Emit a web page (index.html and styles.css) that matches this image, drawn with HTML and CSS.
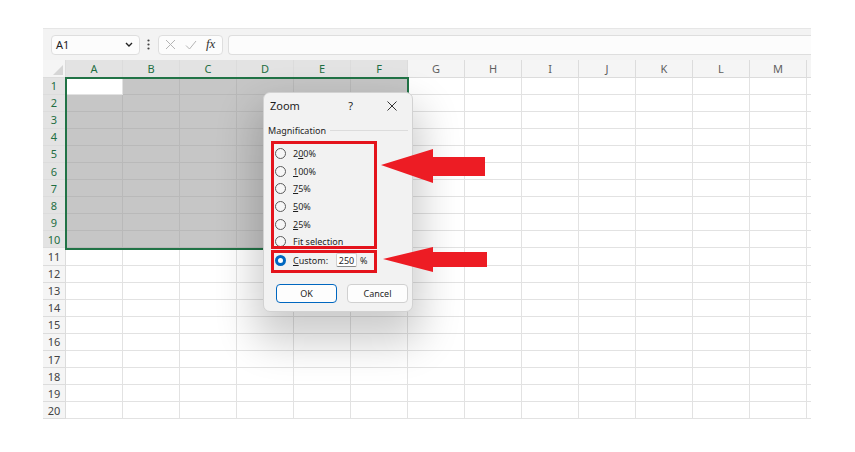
FILE: index.html
```html
<!DOCTYPE html>
<html lang="en">
<head>
  <meta charset="UTF-8">
  <meta name="viewport" content="width=device-width, initial-scale=1.0">
  <link rel="stylesheet" href="styles.css">
  <title>Zoom dialog</title>
</head>
<body>
  <div class="excel">
    <div class="toolbar">
      <div class="namebox">
        <span>A1</span>
        <svg width="8" height="5" viewBox="0 0 8 5"><path d="M1 1 L4 4 L7 1" fill="none" stroke="#222" stroke-width="1.4"/></svg>
      </div>
      <svg class="dots" width="3" height="11" viewBox="0 0 3 11"><circle cx="1.5" cy="1.5" r="1.1" fill="#444"/><circle cx="1.5" cy="5.5" r="1.1" fill="#444"/><circle cx="1.5" cy="9.5" r="1.1" fill="#444"/></svg>
      <div class="fxbox">
        <svg width="11" height="11" viewBox="0 0 11 11"><path d="M1 1 L10 10 M10 1 L1 10" stroke="#b4b4b4" stroke-width="1"/></svg>
        <svg width="12" height="10" viewBox="0 0 12 10"><path d="M1 5.5 L4.5 9 L11 1" fill="none" stroke="#b4b4b4" stroke-width="1"/></svg>
        <span class="fx">fx</span>
      </div>
      <div class="formula"></div>
    </div>
    <div class="sheet-wrap">
      <div class="sheet" id="sheet"></div>
      <div class="selection"></div>
    </div>
  </div>

  <div class="dialog">
    <div class="dlg-title">
      <span class="dlg-name">Zoom</span>
      <span class="help">?</span>
      <svg class="close" width="10" height="10" viewBox="0 0 10 10"><path d="M0.5 0.5 L9.5 9.5 M9.5 0.5 L0.5 9.5" stroke="#333" stroke-width="1"/></svg>
    </div>
    <div class="group"><span>Magnification</span><span class="rule"></span></div>
    <div class="options">
      <div class="opt"><span class="radio"></span><span>2<u>0</u>0%</span></div>
      <div class="opt"><span class="radio"></span><span><u>1</u>00%</span></div>
      <div class="opt"><span class="radio"></span><span><u>7</u>5%</span></div>
      <div class="opt"><span class="radio"></span><span><u>5</u>0%</span></div>
      <div class="opt"><span class="radio"></span><span><u>2</u>5%</span></div>
      <div class="opt"><span class="radio"></span><span><u>F</u>it selection</span></div>
      <div class="opt custom"><span class="radio on"></span><span class="custom-label"><u>C</u>ustom:</span><span class="pct-box">250</span><span class="pct">%</span></div>
    </div>
    <div class="buttons">
      <button class="btn ok">OK</button>
      <button class="btn">Cancel</button>
    </div>
  </div>

  <!-- annotation marks -->
  <div class="mark mark-list"></div>
  <div class="mark mark-custom"></div>
  <svg class="arrows" width="855" height="452" viewBox="0 0 855 452">
    <polygon points="381,165 433,149 433,157 485,157 485,176 433,176 433,183" fill="#ed1c24"/>
    <polygon points="383,259 433,247 433,252 487,252 487,267 433,267 433,272" fill="#ed1c24"/>
  </svg>

  <script>
    //build the sheet grid
    const sheet = document.querySelector('#sheet');
    const cols = 'ABCDEFGHIJKLM';

    function cell(cls, text){
      const div = document.createElement('div');
      div.className = cls;
      if(text) div.textContent = text;
      sheet.appendChild(div);
    }

    //header row (last column is only a sliver, no label)
    cell('head corner');
    for(let c = 0; c < cols.length; c++){
      cell(c < 6 ? 'head col-head hl' : 'head col-head', cols[c]);
    }
    cell('head col-head');

    //rows
    for(let r = 1; r <= 20; r++){
      cell(r <= 10 ? 'head row-head hl' : 'head row-head', String(r));
      for(let c = 0; c <= cols.length; c++){
        let cls = 'cell';
        if(r <= 10 && c < 6 && !(r === 1 && c === 0)) cls += ' sel';
        cell(cls);
      }
    }
  </script>
</body>
</html>
```

FILE: styles.css
```css
body{
  margin: 0;
  background-color: #fff;
  font-family: 'Noto Sans', 'Open Sans', sans-serif;
  position: relative;
  width: 855px;
  height: 452px;
  overflow: hidden;
}

.excel{
  margin: 28px 0 0 43px;
  width: 768px;
  height: 393px;
  overflow: hidden;
  background-color: #fff;
}

/* formula bar */
.toolbar{
  height: 32px;
  box-sizing: border-box;
  background-color: #f3f3f3;
  border-top: 1px solid #e6e6e6;
  display: flex;
  align-items: center;
  padding-left: 8px;
}

.namebox, .fxbox, .formula{
  height: 20px;
  box-sizing: border-box;
  background-color: #fcfcfc;
  border: 1px solid #dedede;
  border-radius: 4px;
  display: flex;
  align-items: center;
}

.namebox{
  width: 89px;
  justify-content: space-between;
  padding: 0 6px 0 4px;
  font-size: 11px;
  color: #222;
}

.dots{
  margin-left: 7px;
}

.fxbox{
  margin-left: 8px;
  width: 65px;
  padding-left: 6px;
  gap: 9px;
}

.fx{
  font-family: 'Liberation Serif', serif;
  font-style: italic;
  font-size: 13px;
  color: #333;
  margin-top: -2px;
}

.formula{
  margin-left: 5px;
  flex: 1;
  border-right: none;
  border-radius: 4px 0 0 4px;
}

/* grid */
.sheet-wrap{
  position: relative;
}

.sheet{
  display: grid;
  grid-template-columns: 23px repeat(14, 57px);
  grid-template-rows: 17.5px repeat(20, 17.1px);
}

.sheet > div{
  box-sizing: border-box;
  border-right: 1px solid #e2e2e2;
  border-bottom: 1px solid #e2e2e2;
}

.head{
  background-color: #f5f5f5;
  color: #5f5f5f;
  font-size: 11px;
  display: flex;
  align-items: center;
  justify-content: center;
  border-color: #dcdcdc !important;
}

.row-head{
  color: #444;
}

.head.hl{
  background-color: #e3e3e3;
  color: #1e6e42;
}

.corner{
  position: relative;
}

.corner:after{
  content: '';
  position: absolute;
  right: 2px;
  bottom: 2px;
  border-left: 10px solid transparent;
  border-bottom: 10px solid #d6d6d6;
}

.cell.sel{
  background-color: #c6c6c6;
  border-color: #b9b9b9;
}

.selection{
  position: absolute;
  left: 22px;
  top: 16.5px;
  width: 344px;
  height: 173px;
  box-sizing: border-box;
  border: 2px solid #217346;
}

/* zoom dialog */
.dialog{
  position: absolute;
  left: 263px;
  top: 92px;
  width: 150px;
  height: 220px;
  box-sizing: border-box;
  background-color: #f2f2f2;
  border: 1px solid #d2d2d2;
  border-radius: 7px;
  box-shadow: 0 22px 40px 8px rgba(0, 0, 0, 0.2);
  color: #1f1f1f;
  font-size: 9px;
}

.dlg-title{
  height: 25px;
  display: flex;
  align-items: center;
  padding: 0 15px 0 6px;
  font-size: 11px;
}

.dlg-name{
  flex: 1;
}

.help{
  margin-right: 34px;
}

.group{
  display: flex;
  align-items: center;
  margin-top: 6px;
  padding: 0 4px;
  height: 13px;
}

.rule{
  flex: 1;
  height: 1px;
  background-color: #dcdcdc;
  margin-left: 4px;
}

.options{
  margin-top: 8px;
}

.opt{
  height: 17.6px;
  display: flex;
  align-items: center;
  padding-left: 11px;
}

.radio{
  width: 11px;
  height: 11px;
  box-sizing: border-box;
  border: 1px solid #5c5c5c;
  border-radius: 50%;
  background-color: #f6f6f6;
  margin-right: 7px;
  flex: none;
}

.radio.on{
  border: 3px solid #0067c0;
  background-color: #fff;
}

.opt.custom{
  height: 19px;
}

.custom-label{
  width: 43px;
}

.pct-box{
  width: 21px;
  height: 14px;
  box-sizing: border-box;
  border: 1px solid #d0d0d0;
  border-bottom-color: #888;
  background-color: #fff;
  display: flex;
  align-items: center;
  justify-content: center;
  border-radius: 2px;
}

.pct{
  margin-left: 3px;
}

.buttons{
  display: flex;
  gap: 10px;
  padding-left: 12px;
  margin-top: 14px;
}

.btn{
  font-family: inherit;
  font-size: 9px;
  color: #1f1f1f;
  width: 61px;
  height: 19px;
  padding: 0;
  background-color: #fdfdfd;
  border: 1px solid #d0d0d0;
  border-radius: 4px;
}

.btn.ok{
  border-color: #0067c0;
}

/* red annotation marks */
.mark{
  position: absolute;
  box-sizing: border-box;
  border: 3px solid #e4141c;
}

.mark-list{
  left: 271px;
  top: 141px;
  width: 106px;
  height: 108px;
}

.mark-custom{
  left: 271px;
  top: 250px;
  width: 106px;
  height: 23px;
}

.arrows{
  position: absolute;
  left: 0;
  top: 0;
}
```
